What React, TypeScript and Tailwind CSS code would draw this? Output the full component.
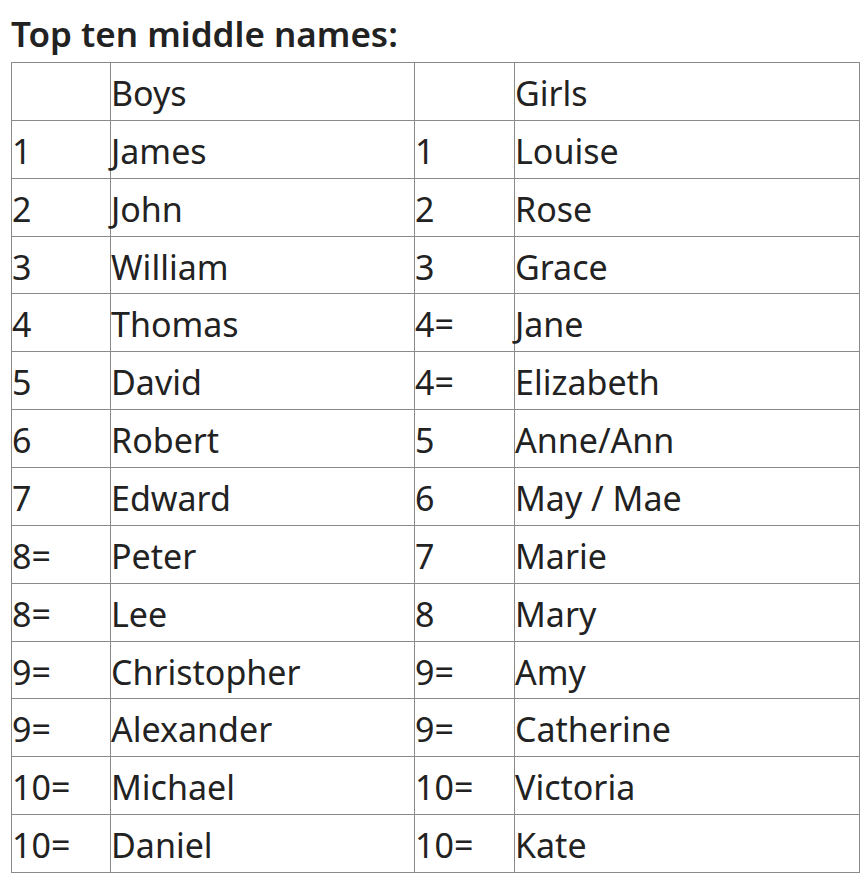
const boys = [
  ['1', 'James'],
  ['2', 'John'],
  ['3', 'William'],
  ['4', 'Thomas'],
  ['5', 'David'],
  ['6', 'Robert'],
  ['7', 'Edward'],
  ['8=', 'Peter'],
  ['8=', 'Lee'],
  ['9=', 'Christopher'],
  ['9=', 'Alexander'],
  ['10=', 'Michael'],
  ['10=', 'Daniel'],
]

const girls = [
  ['1', 'Louise'],
  ['2', 'Rose'],
  ['3', 'Grace'],
  ['4=', 'Jane'],
  ['4=', 'Elizabeth'],
  ['5', 'Anne/Ann'],
  ['6', 'May / Mae'],
  ['7', 'Marie'],
  ['8', 'Mary'],
  ['9=', 'Amy'],
  ['9=', 'Catherine'],
  ['10=', 'Victoria'],
  ['10=', 'Kate'],
]

function Cell({ children, w }: { children?: React.ReactNode; w: string }) {
  return (
    <td className={`${w} h-[57.86px] border border-[#8a8a8a] pl-0 pt-[3px] align-middle leading-none`}>
      {children}
    </td>
  )
}

export default function App() {
  return (
    <div className="bg-white min-h-screen pl-[11px] pt-[14px] text-[#222] font-['Noto_Sans',sans-serif] text-[34px]">
      <h2 className="font-semibold text-[35px] leading-[40px] pl-0 mb-[8px]">Top ten middle names:</h2>
      <table className="border-collapse border border-[#555] table-fixed w-[849px]">
        <tbody>
          <tr>
            <Cell w="w-[99px]" />
            <Cell w="w-[304px]">Boys</Cell>
            <Cell w="w-[100px]" />
            <Cell w="w-[345px]">Girls</Cell>
          </tr>
          {boys.map((b, i) => (
            <tr key={i}>
              <Cell w="w-[99px]">{b[0]}</Cell>
              <Cell w="w-[304px]">{b[1]}</Cell>
              <Cell w="w-[100px]">{girls[i][0]}</Cell>
              <Cell w="w-[345px]">{girls[i][1]}</Cell>
            </tr>
          ))}
        </tbody>
      </table>
    </div>
  )
}
